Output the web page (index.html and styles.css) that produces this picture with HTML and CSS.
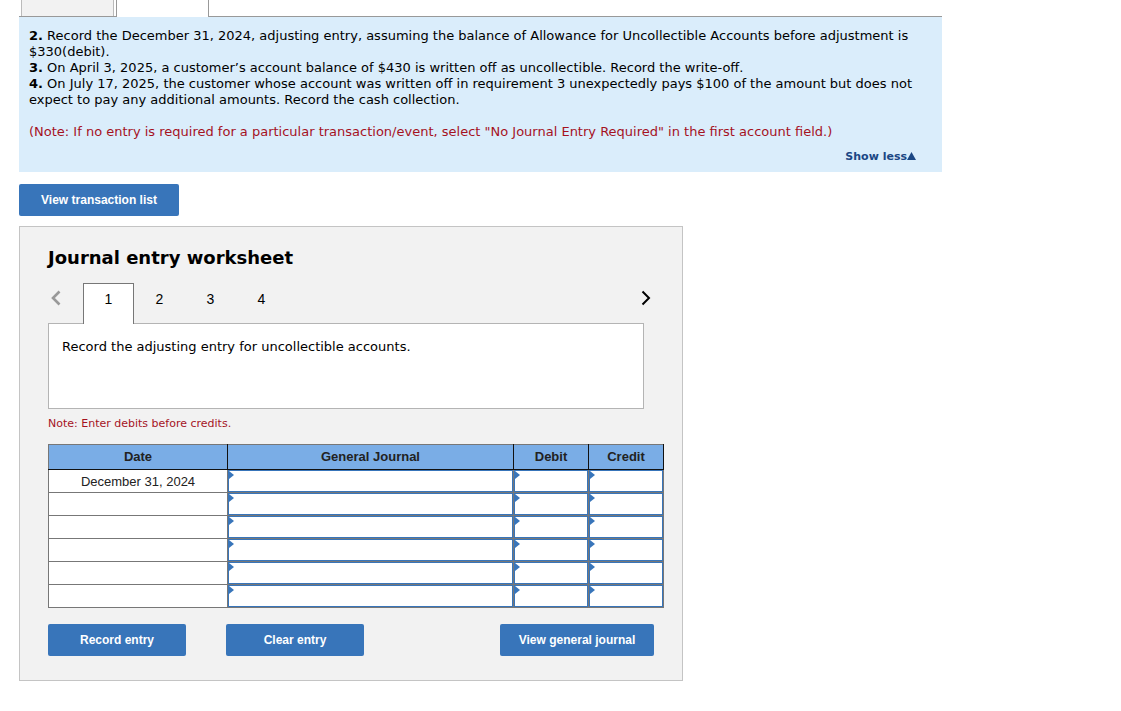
FILE: index.html
```
<!DOCTYPE html>
<html lang="en">
    <head>
        <meta charset="utf-8">
        <title>Journal entry worksheet</title>
        <link rel="stylesheet" href="styles.css">
    </head>
    <body>
        <div class="page">
            <div class="top-tabs">
                <div class="top-tab"></div>
                <div class="top-tab-active"></div>
                <div class="top-tab-rest"></div>
            </div>

            <div class="requirements">
                <p><b>2.</b> Record the December 31, 2024, adjusting entry, assuming the balance of Allowance for Uncollectible Accounts before adjustment is $330(debit).</p>
                <p><b>3.</b> On April 3, 2025, a customer’s account balance of $430 is written off as uncollectible. Record the write-off.</p>
                <p><b>4.</b> On July 17, 2025, the customer whose account was written off in requirement 3 unexpectedly pays $100 of the amount but does not expect to pay any additional amounts. Record the cash collection.</p>
                <p class="red">(Note: If no entry is required for a particular transaction/event, select "No Journal Entry Required" in the first account field.)</p>
                <a href="#" class="show-less">Show less<svg width="9" height="8" viewBox="0 0 9 8"><path d="M4.5 0L9 8H0z" fill="#1b4784"/></svg></a>
            </div>

            <button class="btn btn-list">View transaction list</button>

            <div class="worksheet">
                <h1>Journal entry worksheet</h1>
                <div class="steps">
                    <button class="arrow" aria-label="Previous" disabled><svg width="10" height="16" viewBox="0 0 10 16"><path d="M8.500 1.500L2 8l6.500 6.500" fill="none" stroke="#999" stroke-width="2.600"/></svg></button>
                    <button class="step active">1</button>
                    <button class="step">2</button>
                    <button class="step">3</button>
                    <button class="step">4</button>
                    <button class="arrow next" aria-label="Next"><svg width="10" height="16" viewBox="0 0 10 16"><path d="M1.500 1.500L8 8l-6.500 6.500" fill="none" stroke="#000" stroke-width="2"/></svg></button>
                </div>
                <div class="prompt">Record the adjusting entry for uncollectible accounts.</div>
                <p class="note">Note: Enter debits before credits.</p>

                <table>
                    <colgroup>
                        <col class="col-date">
                        <col>
                        <col class="col-amount">
                        <col class="col-amount">
                    </colgroup>
                    <thead>
                        <tr><th>Date</th><th>General Journal</th><th>Debit</th><th>Credit</th></tr>
                    </thead>
                    <tbody>
                        <tr>
                            <td>December 31, 2024</td>
                            <td class="entry"><input type="text" aria-label="Account 1"></td>
                            <td class="entry"><input type="text" aria-label="Debit 1"></td>
                            <td class="entry"><input type="text" aria-label="Credit 1"></td>
                        </tr>
                        <tr>
                            <td></td>
                            <td class="entry"><input type="text" aria-label="Account 2"></td>
                            <td class="entry"><input type="text" aria-label="Debit 2"></td>
                            <td class="entry"><input type="text" aria-label="Credit 2"></td>
                        </tr>
                        <tr>
                            <td></td>
                            <td class="entry"><input type="text" aria-label="Account 3"></td>
                            <td class="entry"><input type="text" aria-label="Debit 3"></td>
                            <td class="entry"><input type="text" aria-label="Credit 3"></td>
                        </tr>
                        <tr>
                            <td></td>
                            <td class="entry"><input type="text" aria-label="Account 4"></td>
                            <td class="entry"><input type="text" aria-label="Debit 4"></td>
                            <td class="entry"><input type="text" aria-label="Credit 4"></td>
                        </tr>
                        <tr>
                            <td></td>
                            <td class="entry"><input type="text" aria-label="Account 5"></td>
                            <td class="entry"><input type="text" aria-label="Debit 5"></td>
                            <td class="entry"><input type="text" aria-label="Credit 5"></td>
                        </tr>
                        <tr>
                            <td></td>
                            <td class="entry"><input type="text" aria-label="Account 6"></td>
                            <td class="entry"><input type="text" aria-label="Debit 6"></td>
                            <td class="entry"><input type="text" aria-label="Credit 6"></td>
                        </tr>
                    </tbody>
                </table>

                <div class="actions">
                    <button class="btn btn-entry">Record entry</button>
                    <button class="btn btn-entry">Clear entry</button>
                    <button class="btn btn-journal">View general journal</button>
                </div>
            </div>
        </div>
    </body>
</html>
```
FILE: styles.css
```
* {
    box-sizing: border-box;
}

body {
    margin: 0;
    background: #fff;
    color: #000;
    font-family: Verdana, "DejaVu Sans", sans-serif;
    font-size: 13px;
    line-height: 16px;
}

p {
    margin: 0;
}

button {
    font-family: Arial, "Liberation Sans", sans-serif;
    cursor: pointer;
}

.page {
    max-width: 961px;
    padding: 0 19px;
}

/* tabs above the requirements */
.top-tabs {
    display: flex;
    height: 17px;
}

.top-tab {
    width: 97px;
    padding: 0 2px;
    border-bottom: 1px solid #999;
}

.top-tab::before {
    content: "";
    display: block;
    height: 16px;
    background: #f2f2f2;
    border: 1px solid #bbb;
    border-width: 0 1px;
}

.top-tab-active {
    width: 93px;
    border: 1px solid #999;
    border-width: 0 1px;
}

.top-tab-rest {
    flex: 1;
    border-bottom: 1px solid #999;
}

.requirements {
    padding: 11px 10px 7px;
    background: #daedfb;
}

.red {
    margin-top: 16px;
    color: #a5121f;
}

.show-less {
    display: block;
    margin-top: 9px;
    padding-right: 16px;
    text-align: right;
    font-size: 11px;
    font-weight: bold;
    color: #1b4784;
    text-decoration: none;
}

.btn {
    height: 32px;
    padding: 0;
    border: none;
    border-radius: 2px;
    background: #3875ba;
    color: #fff;
    font-size: 12px;
    font-weight: bold;
}

.btn-list {
    display: block;
    width: 160px;
    margin: 12px 0 10px;
}

.worksheet {
    max-width: 664px;
    padding: 20px 18px 24px 28px;
    border: 1px solid #c4c4c4;
    background: #f2f2f2;
}

h1 {
    margin: 0;
    font-size: 18px;
    line-height: 22px;
}

.steps {
    display: flex;
    position: relative;
    height: 41px;
    margin: 14px 10px 0 0;
}

.step {
    width: 51px;
    padding: 0 0 10px;
    border: 1px solid transparent;
    border-bottom: none;
    background: none;
    font-size: 14px;
}

.step.active {
    border-color: #777;
    background: #fff;
}

.arrow {
    display: flex;
    width: 35px;
    padding: 7px 0 0 3px;
    border: none;
    background: none;
}

.next {
    width: 13px;
    margin-left: auto;
    padding-left: 0;
}

.prompt {
    min-height: 86px;
    margin: -1px 20px 0 0;
    padding: 15px 13px;
    border: 1px solid #b4b4b4;
    background: #fff;
}

.note {
    margin: 7px 0 12px;
    font-size: 11px;
    color: #a5121f;
}

table {
    width: 100%;
    table-layout: fixed;
    border-collapse: collapse;
    background: #fff;
    font-family: Arial, "Liberation Sans", sans-serif;
    color: #222;
}

.col-date {
    width: 179px;
}

.col-amount {
    width: 75px;
}

th {
    height: 25px;
    padding: 0;
    border: 1px solid #111;
    border-top-color: #777;
    background: #7aade6;
}

th:first-child {
    border-left-color: #777;
}

td {
    height: 23px;
    padding: 2px 0 0;
    border: 1px solid #777;
    text-align: center;
}

.entry {
    position: relative;
    padding: 0;
}

.entry input {
    display: block;
    width: 100%;
    height: 22px;
    padding: 0 6px;
    border: 1px solid #3875ba;
    background: #fff;
    font-size: 13px;
}

/* blue marker in the corner of each field */
.entry::before {
    content: "";
    position: absolute;
    top: 1px;
    left: 1px;
    border: 4px solid transparent;
    border-left: 5px solid #3875ba;
    border-right: none;
}

.actions {
    display: flex;
    gap: 40px;
    margin: 16px 10px 0 0;
}

.btn-entry {
    width: 138px;
}

.btn-journal {
    width: 154px;
    margin-left: auto;
}
```
